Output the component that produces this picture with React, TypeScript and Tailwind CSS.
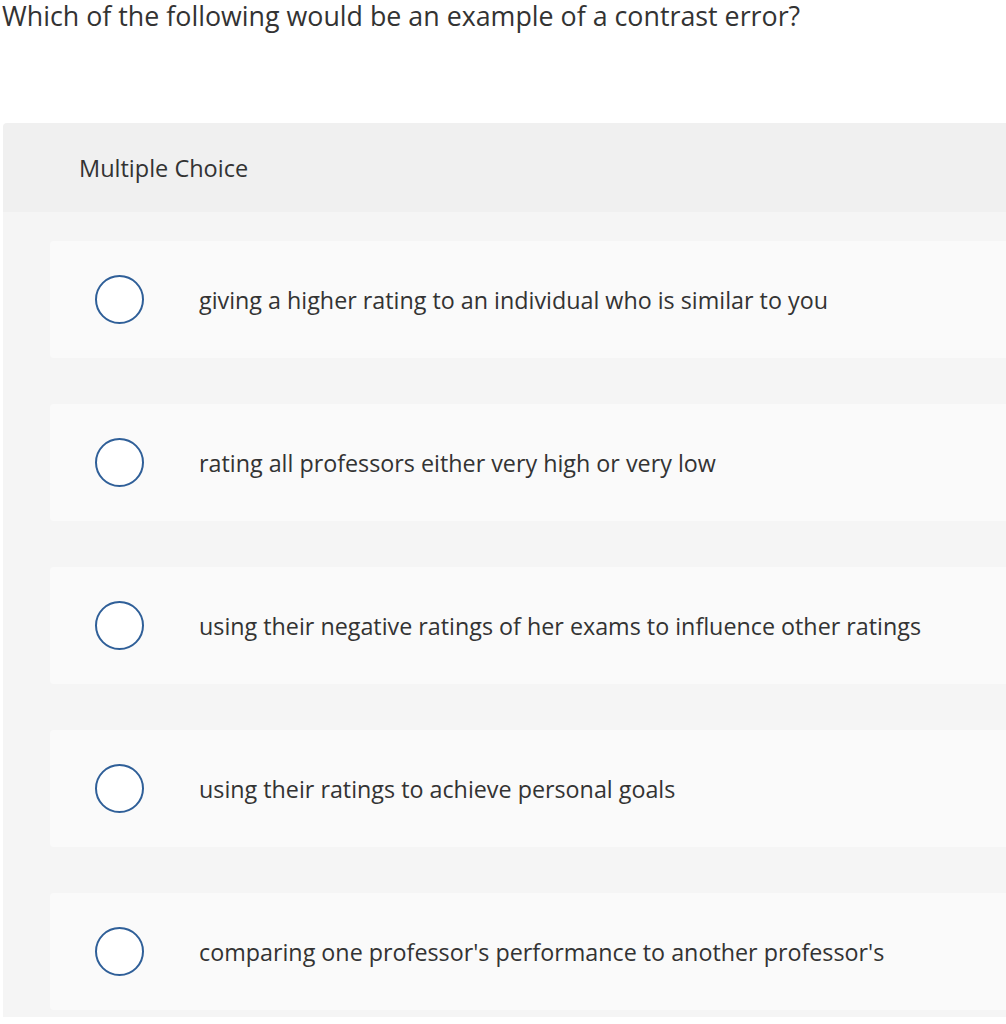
import React from 'react';

const options = [
  'giving a higher rating to an individual who is similar to you',
  'rating all professors either very high or very low',
  'using their negative ratings of her exams to influence other ratings',
  'using their ratings to achieve personal goals',
  "comparing one professor's performance to another professor's",
];

const App: React.FC = () => {
  return (
    <div className="min-h-screen bg-white text-[#333333] font-['Open_Sans','Liberation_Sans',sans-serif]">
      <h1 className="pl-[2px] text-[26.8px] leading-[32px] font-normal whitespace-nowrap">
        Which of the following would be an example of a contrast error?
      </h1>

      <div className="mt-[91px] ml-[3px] rounded-tl-[4px] overflow-hidden">
        {/* header */}
        <div className="h-[89px] bg-[#f0f0f0] flex items-center pl-[76px] pt-[2px]">
          <span className="text-[23.5px]">Multiple Choice</span>
        </div>

        {/* choices */}
        <div className="bg-[#f5f5f5] pt-[29px] pb-[7px] pl-[47px] flex flex-col gap-[46px]">
          {options.map((opt) => (
            <div
              key={opt}
              className="h-[117px] bg-[#fafafa] rounded-l-[4px] flex items-center"
            >
              <div className="ml-[45px] w-[49px] h-[49px] rounded-full border-2 border-[#2f5f98] bg-white shrink-0" />
              <span className="ml-[55px] pt-[2px] text-[23.3px] whitespace-nowrap">{opt}</span>
            </div>
          ))}
        </div>
      </div>
    </div>
  );
};

export default App;
